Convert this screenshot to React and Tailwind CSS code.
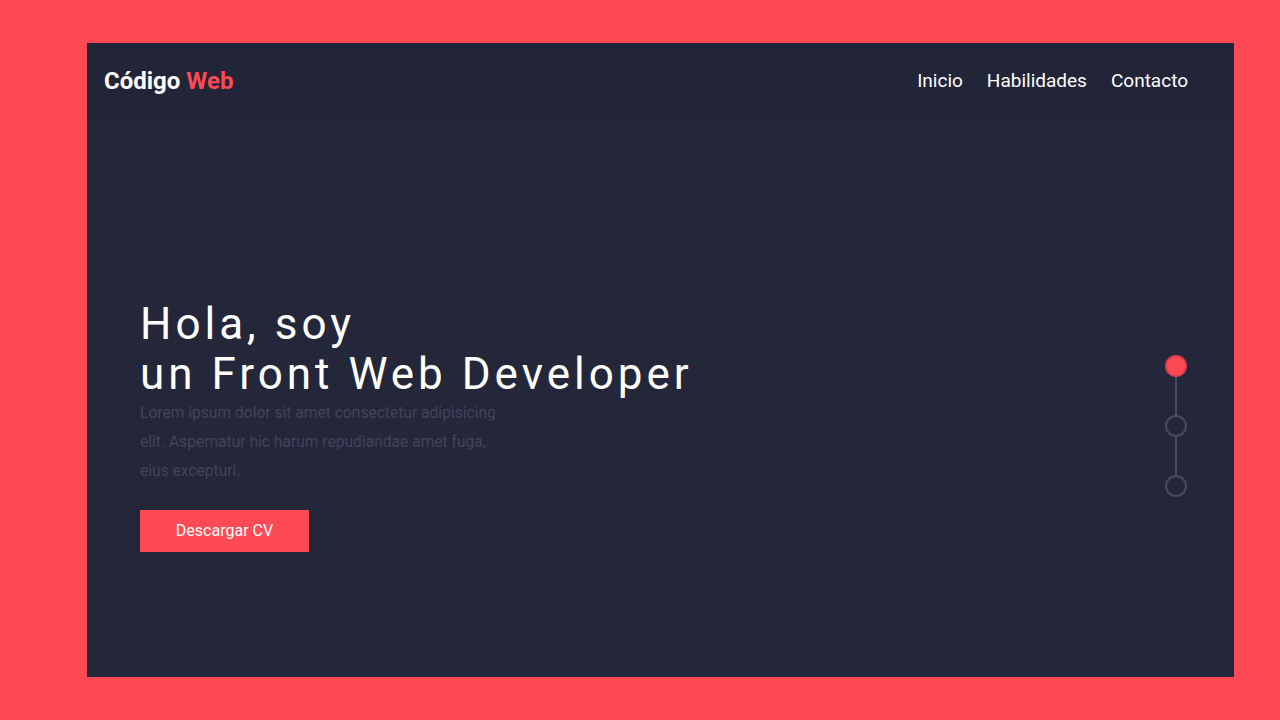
import React from 'react';

const navLinks = ['Inicio', 'Habilidades', 'Contacto'];

const Dot = ({ active }) => (
  <div
    className={
      active
        ? 'w-[22px] h-[22px] rounded-full bg-[#fe4a55] border-2 border-[#d9404b]'
        : 'w-[22px] h-[22px] rounded-full border-2 border-[#4a4c5b]'
    }
  />
);

const App = () => {
  return (
    <div
      className="w-[1280px] h-[720px] bg-[#fe4a55] pl-[87px] pr-[46px] pt-[43px] pb-[43px]"
      style={{ fontFamily: 'Roboto, "Liberation Sans", sans-serif' }}
    >
      <div className="w-full h-full bg-[#242639] flex flex-col">
        {/* Header */}
        <header className="h-[77px] bg-[#222437] flex items-center justify-between pl-[17px] pr-[46px] pb-[2px]">
          <div className="text-[24px] font-bold text-white leading-none">
            Código <span className="text-[#fe4a55]">Web</span>
          </div>
          <nav className="flex items-center gap-[24px]">
            {navLinks.map(link => (
              <a key={link} className="text-[19px] text-white leading-none">
                {link}
              </a>
            ))}
          </nav>
        </header>

        {/* Hero */}
        <main className="flex-1 flex items-start justify-between pl-[53px] pr-[47px]">
          <div className="pt-[179px] flex flex-col items-start">
            <h1 className="text-[44px] leading-[50px] font-normal text-white tracking-[4px]">
              Hola, soy
              <br />
              un Front Web Developer
            </h1>
            <p className="text-[15.6px] leading-[29px] text-[#42445a] max-w-[368px]">
              Lorem ipsum dolor sit amet consectetur adipisicing elit. Aspernatur hic harum repudiandae amet fuga, eius excepturi.
            </p>
            <button className="mt-[24px] w-[169px] h-[42px] bg-[#fe4a55] text-white text-[16px]">
              Descargar CV
            </button>
          </div>

          <div className="pt-[235px] flex flex-col items-center">
            <Dot active />
            <div className="w-[2px] h-[38px] bg-[#4a4c5b]" />
            <Dot />
            <div className="w-[2px] h-[38px] bg-[#4a4c5b]" />
            <Dot />
          </div>
        </main>
      </div>
    </div>
  );
};

export default App;
